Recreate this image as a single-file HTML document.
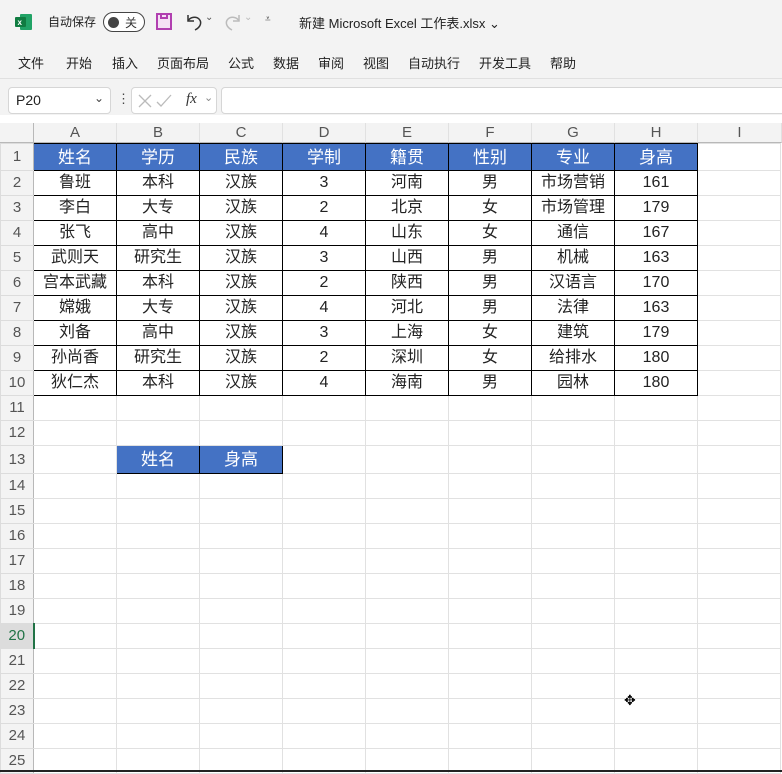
<!DOCTYPE html>
<html><head><meta charset="utf-8"><style>
*{margin:0;padding:0;box-sizing:border-box}
body{width:782px;height:772px;overflow:hidden;background:#fff;font-family:"Liberation Sans","Noto Sans CJK SC",sans-serif;position:relative}
.top{position:absolute;left:0;top:0;width:782px;height:115px;background:#f3f3f3}
.t{position:absolute;font-size:13px;color:#222;white-space:nowrap}
.menu span{position:absolute;top:53px;font-size:13px;color:#222}
.ch{position:absolute;top:123px;height:20px;width:83px;background:#f3f3f3;border-right:1px solid #e1e1e1;border-bottom:1px solid #b8b8b8;color:#555;font-size:15px;line-height:20px;text-align:center}
table{position:absolute;left:0;top:143px;border-collapse:collapse;table-layout:fixed;width:780px}
td{border:1px solid #e1e1e1;font-size:16px;line-height:16px;text-align:center;vertical-align:middle;color:#222;padding:0;overflow:hidden;white-space:nowrap;height:25px}
td.r{background:#f3f3f3;color:#555;font-size:15px;border-color:#dcdcdc;border-right-color:#b8b8b8;text-align:center}
td.b{border-color:#000}
td.hd{background:#4472c4;color:#fff;border-color:#000;font-size:17px;line-height:17px}
tr{height:25px}
</style></head><body>
<div class="top"></div>
<svg style="position:absolute;left:15px;top:13px" width="18" height="18"><rect x="5" y="1" width="12" height="16" rx="1" fill="#21a366"/><rect x="0" y="4" width="11" height="10" rx="1" fill="#107c41"/><text x="2.5" y="12" font-size="8" fill="#fff" font-family="Liberation Sans" font-weight="bold">x</text></svg>
<div class="t" style="left:48px;top:13px;font-size:12px">自动保存</div>
<div style="position:absolute;left:103px;top:12px;width:42px;height:20px;border:1px solid #444;border-radius:10px;background:#fff"><div style="position:absolute;left:4px;top:4px;width:11px;height:11px;border-radius:6px;background:#444"></div><span style="position:absolute;left:21px;top:1px;font-size:12px;color:#333">关</span></div>
<div style="position:absolute;left:156px;top:13px;width:16px;height:17px;border:2px solid #b13fb0;background:#f5e0f5"><div style="position:absolute;left:2px;top:-1px;width:8px;height:5px;border:2px solid #b13fb0;border-top:none"></div></div>
<svg style="position:absolute;left:184px;top:12px" width="20" height="20" fill="none" stroke="#333" stroke-width="1.5"><path d="M4 3v6h6"/><path d="M4 9c2-4 8-5 11-2s2 8-4 11"/></svg>
<div class="t" style="left:205px;top:12px;font-size:10px;color:#555">⌄</div>
<svg style="position:absolute;left:223px;top:12px" width="20" height="20" fill="none" stroke="#bbb" stroke-width="1.5"><path d="M16 3v6h-6"/><path d="M16 9c-2-4-8-5-11-2s-2 8 4 11"/></svg>
<div class="t" style="left:244px;top:12px;font-size:10px;color:#bbb">⌄</div>
<div class="t" style="left:265px;top:14px;font-size:10px;color:#444">⩡</div>
<div class="t" style="left:299px;top:13px">新建 Microsoft Excel 工作表.xlsx ⌄</div>
<div class="menu"><span style="left:18px">文件</span><span style="left:66px">开始</span><span style="left:112px">插入</span><span style="left:157px">页面布局</span><span style="left:228px">公式</span><span style="left:273px">数据</span><span style="left:318px">审阅</span><span style="left:363px">视图</span><span style="left:408px">自动执行</span><span style="left:479px">开发工具</span><span style="left:550px">帮助</span></div>
<div style="position:absolute;left:0;top:78px;width:782px;height:1px;background:#e0e0e0"></div>
<div style="position:absolute;left:8px;top:87px;width:103px;height:27px;background:#fff;border:1px solid #d6d6d6;border-radius:4px"><span class="t" style="left:7px;top:4px;font-size:14px">P20</span><span class="t" style="left:85px;top:3px;font-size:12px;color:#444">⌄</span></div>
<div class="t" style="left:117px;top:91px;font-size:13px;color:#444">⋮</div>
<div style="position:absolute;left:131px;top:87px;width:86px;height:27px;background:#fff;border:1px solid #d6d6d6;border-radius:4px">
<svg style="position:absolute;left:5px;top:6px" width="40" height="14" fill="none" stroke="#bbb" stroke-width="1.3"><path d="M2 1l12 12M14 1L2 13"/><path d="M20 8l4 4 10-11"/></svg>
<span class="t" style="left:54px;top:3px;font-size:15px;font-style:italic;font-family:'Liberation Serif',serif;color:#333">fx</span><span class="t" style="left:72px;top:3px;font-size:11px;color:#888">⌄</span></div>
<div style="position:absolute;left:221px;top:87px;width:565px;height:27px;background:#fff;border:1px solid #d6d6d6;border-radius:4px"></div>
<div class="ch" style="left:0;width:34px;border-right-color:#b8b8b8"></div>
<div class="ch" style="left:34px">A</div><div class="ch" style="left:117px">B</div><div class="ch" style="left:200px">C</div><div class="ch" style="left:283px">D</div><div class="ch" style="left:366px">E</div><div class="ch" style="left:449px">F</div><div class="ch" style="left:532px">G</div><div class="ch" style="left:615px">H</div><div class="ch" style="left:698px;width:84px">I</div>
<table>
<colgroup><col style="width:33px"><col style="width:83px"><col style="width:83px"><col style="width:83px"><col style="width:83px"><col style="width:83px"><col style="width:83px"><col style="width:83px"><col style="width:83px"><col style="width:83px"></colgroup>
<tr style="height:27px"><td class="r" style="height:27px">1</td><td class="hd">姓名</td><td class="hd">学历</td><td class="hd">民族</td><td class="hd">学制</td><td class="hd">籍贯</td><td class="hd">性别</td><td class="hd">专业</td><td class="hd">身高</td><td></td></tr>
<tr><td class="r">2</td><td class="b">鲁班</td><td class="b">本科</td><td class="b">汉族</td><td class="b">3</td><td class="b">河南</td><td class="b">男</td><td class="b">市场营销</td><td class="b">161</td><td></td></tr>
<tr><td class="r">3</td><td class="b">李白</td><td class="b">大专</td><td class="b">汉族</td><td class="b">2</td><td class="b">北京</td><td class="b">女</td><td class="b">市场管理</td><td class="b">179</td><td></td></tr>
<tr><td class="r">4</td><td class="b">张飞</td><td class="b">高中</td><td class="b">汉族</td><td class="b">4</td><td class="b">山东</td><td class="b">女</td><td class="b">通信</td><td class="b">167</td><td></td></tr>
<tr><td class="r">5</td><td class="b">武则天</td><td class="b">研究生</td><td class="b">汉族</td><td class="b">3</td><td class="b">山西</td><td class="b">男</td><td class="b">机械</td><td class="b">163</td><td></td></tr>
<tr><td class="r">6</td><td class="b">宫本武藏</td><td class="b">本科</td><td class="b">汉族</td><td class="b">2</td><td class="b">陕西</td><td class="b">男</td><td class="b">汉语言</td><td class="b">170</td><td></td></tr>
<tr><td class="r">7</td><td class="b">嫦娥</td><td class="b">大专</td><td class="b">汉族</td><td class="b">4</td><td class="b">河北</td><td class="b">男</td><td class="b">法律</td><td class="b">163</td><td></td></tr>
<tr><td class="r">8</td><td class="b">刘备</td><td class="b">高中</td><td class="b">汉族</td><td class="b">3</td><td class="b">上海</td><td class="b">女</td><td class="b">建筑</td><td class="b">179</td><td></td></tr>
<tr><td class="r">9</td><td class="b">孙尚香</td><td class="b">研究生</td><td class="b">汉族</td><td class="b">2</td><td class="b">深圳</td><td class="b">女</td><td class="b">给排水</td><td class="b">180</td><td></td></tr>
<tr><td class="r">10</td><td class="b">狄仁杰</td><td class="b">本科</td><td class="b">汉族</td><td class="b">4</td><td class="b">海南</td><td class="b">男</td><td class="b">园林</td><td class="b">180</td><td></td></tr>
<tr><td class="r">11</td><td></td><td></td><td></td><td></td><td></td><td></td><td></td><td></td><td></td></tr>
<tr><td class="r">12</td><td></td><td></td><td></td><td></td><td></td><td></td><td></td><td></td><td></td></tr>
<tr style="height:28px"><td class="r" style="height:28px">13</td><td></td><td class="hd">姓名</td><td class="hd">身高</td><td></td><td></td><td></td><td></td><td></td><td></td></tr>
<tr><td class="r">14</td><td></td><td></td><td></td><td></td><td></td><td></td><td></td><td></td><td></td></tr>
<tr><td class="r">15</td><td></td><td></td><td></td><td></td><td></td><td></td><td></td><td></td><td></td></tr>
<tr><td class="r">16</td><td></td><td></td><td></td><td></td><td></td><td></td><td></td><td></td><td></td></tr>
<tr><td class="r">17</td><td></td><td></td><td></td><td></td><td></td><td></td><td></td><td></td><td></td></tr>
<tr><td class="r">18</td><td></td><td></td><td></td><td></td><td></td><td></td><td></td><td></td><td></td></tr>
<tr><td class="r">19</td><td></td><td></td><td></td><td></td><td></td><td></td><td></td><td></td><td></td></tr>
<tr><td class="r" style="background:#dcdcdc;color:#217346;border-right:2px solid #217346">20</td><td></td><td></td><td></td><td></td><td></td><td></td><td></td><td></td><td></td></tr>
<tr><td class="r">21</td><td></td><td></td><td></td><td></td><td></td><td></td><td></td><td></td><td></td></tr>
<tr><td class="r">22</td><td></td><td></td><td></td><td></td><td></td><td></td><td></td><td></td><td></td></tr>
<tr><td class="r">23</td><td></td><td></td><td></td><td></td><td></td><td></td><td></td><td></td><td></td></tr>
<tr><td class="r">24</td><td></td><td></td><td></td><td></td><td></td><td></td><td></td><td></td><td></td></tr>
<tr><td class="r">25</td><td></td><td></td><td></td><td></td><td></td><td></td><td></td><td></td><td></td></tr>
</table>
<div style="position:absolute;left:0;top:770px;width:782px;height:2px;background:#222"></div>
<div class="t" style="left:624px;top:692px;font-size:14px;color:#000">✥</div>
</body></html>
